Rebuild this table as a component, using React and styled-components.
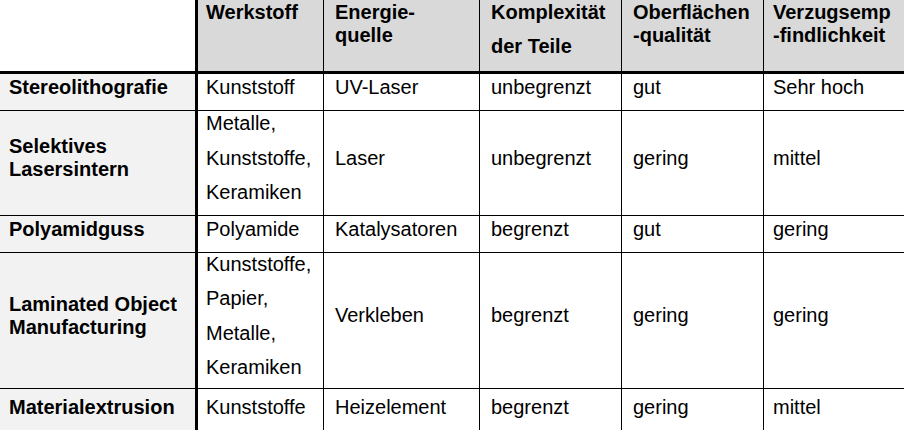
import React from "react";
import styled, { createGlobalStyle } from "styled-components";

const GlobalStyle = createGlobalStyle`
  html, body {
    margin: 0;
    padding: 0;
    background: #ffffff;
    overflow: hidden;
  }
  body {
    font-family: "Liberation Sans", Arial, sans-serif;
    color: #000;
  }
`;

const columns = [
  { key: "name", pad: 9 },
  { key: "material", pad: 8, title: ["Werkstoff"] },
  { key: "energy", pad: 11, title: ["Energie-", "quelle"] },
  { key: "complex", pad: 11, title: ["Komplexität", "der Teile"], loose: true },
  { key: "surface", pad: 11, title: ["Oberflächen", "-qualität"] },
  { key: "warp", pad: 9, title: ["Verzugsemp", "-findlichkeit"] },
];

const rows = [
  {
    name: ["Stereolithografie"],
    material: ["Kunststoff"],
    energy: "UV-Laser",
    complex: "unbegrenzt",
    surface: "gut",
    warp: "Sehr hoch",
  },
  {
    name: ["Selektives", "Lasersintern"],
    material: ["Metalle,", "Kunststoffe,", "Keramiken"],
    energy: "Laser",
    complex: "unbegrenzt",
    surface: "gering",
    warp: "mittel",
  },
  {
    name: ["Polyamidguss"],
    material: ["Polyamide"],
    energy: "Katalysatoren",
    complex: "begrenzt",
    surface: "gut",
    warp: "gering",
  },
  {
    name: ["Laminated Object", "Manufacturing"],
    material: ["Kunststoffe,", "Papier,", "Metalle,", "Keramiken"],
    energy: "Verkleben",
    complex: "begrenzt",
    surface: "gering",
    warp: "gering",
  },
  {
    name: ["Materialextrusion"],
    material: ["Kunststoffe"],
    energy: "Heizelement",
    complex: "begrenzt",
    surface: "gering",
    warp: "mittel",
  },
];

const Table = styled.div`
  display: grid;
  width: 904px;
  grid-template-columns: 198px 126px 156px 142px 142px 1fr;
  grid-template-rows: 74px 37px 105px 37px 136px 48px;
  font-size: 20px;
`;

const BaseCell = styled.div`
  box-sizing: border-box;
  min-width: 0;
  padding-left: ${(p) => p.$pad}px;
  border-right: ${(p) => (p.$first ? "3px" : p.$last ? "0" : "1px")} solid #000;
  white-space: nowrap;
`;

const Corner = styled(BaseCell)`
  background: #ffffff;
  border-bottom: 3px solid #000;
`;

const HeadCell = styled(BaseCell)`
  background: #d9d9d9;
  border-bottom: 3px solid #000;
  padding-top: 1px;
  font-weight: bold;
  line-height: 23px;
  display: flex;
  flex-direction: column;
  gap: ${(p) => (p.$loose ? "11px" : "0")};
`;

const BodyCell = styled(BaseCell)`
  border-bottom: 1px solid #000;
  padding-bottom: 10px;
  display: flex;
  flex-direction: column;
  justify-content: center;
  line-height: 34.5px;
`;

const NameCell = styled(BodyCell)`
  background: #f2f2f2;
  font-weight: bold;
  line-height: 23px;
`;

const Line = styled.span`
  display: block;
`;

const lines = (value) =>
  (Array.isArray(value) ? value : [value]).map((t) => <Line key={t}>{t}</Line>);

export default function App() {
  return (
    <>
      <GlobalStyle />
      <Table>
        {columns.map((col, i) =>
          i === 0 ? (
            <Corner key={col.key} $pad={col.pad} $first />
          ) : (
            <HeadCell
              key={col.key}
              $pad={col.pad}
              $loose={col.loose}
              $last={i === columns.length - 1}
            >
              {lines(col.title)}
            </HeadCell>
          )
        )}
        {rows.map((row, r) =>
          columns.map((col, i) => {
            const Cell = i === 0 ? NameCell : BodyCell;
            return (
              <Cell
                key={`${r}-${col.key}`}
                $pad={col.pad}
                $first={i === 0}
                $last={i === columns.length - 1}
              >
                {lines(row[col.key])}
              </Cell>
            );
          })
        )}
      </Table>
    </>
  );
}
